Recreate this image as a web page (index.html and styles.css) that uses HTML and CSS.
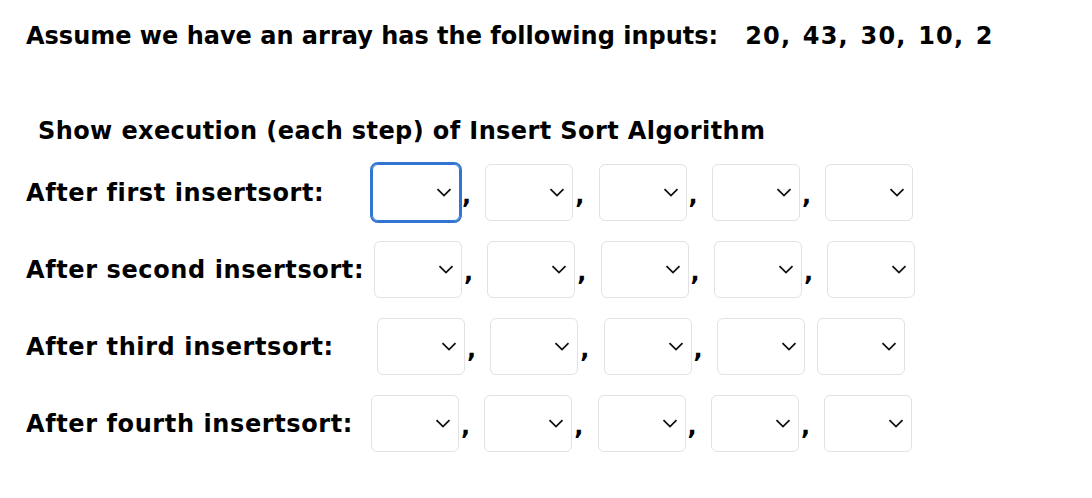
FILE: index.html
```html
<!DOCTYPE html>
<html lang="en">
<head>
<meta charset="utf-8">
<title>Insert Sort Steps</title>
<link rel="stylesheet" href="styles.css">
</head>
<body>
<main class="quiz">
  <p class="prompt">Assume we have an array has the following inputs:<span class="values">20, 43, 30, 10, 2</span></p>
  <p class="task">Show execution (each step) of Insert Sort Algorithm</p>

  <div class="steps">
    <div class="step">
      <span class="step-label">After first insertsort:</span>
      <div class="slots">
        <span class="cell"><span class="slot"><select class="pick is-active"><option></option><option>2</option><option>10</option><option>20</option><option>30</option><option>43</option></select><svg class="chev" viewBox="0 0 16 9" aria-hidden="true"><path d="M1.5 1.2 L8 7.6 L14.5 1.2"/></svg></span><span class="comma">,</span></span>
        <span class="cell"><span class="slot"><select class="pick"><option></option><option>2</option><option>10</option><option>20</option><option>30</option><option>43</option></select><svg class="chev" viewBox="0 0 16 9" aria-hidden="true"><path d="M1.5 1.2 L8 7.6 L14.5 1.2"/></svg></span><span class="comma">,</span></span>
        <span class="cell"><span class="slot"><select class="pick"><option></option><option>2</option><option>10</option><option>20</option><option>30</option><option>43</option></select><svg class="chev" viewBox="0 0 16 9" aria-hidden="true"><path d="M1.5 1.2 L8 7.6 L14.5 1.2"/></svg></span><span class="comma">,</span></span>
        <span class="cell"><span class="slot"><select class="pick"><option></option><option>2</option><option>10</option><option>20</option><option>30</option><option>43</option></select><svg class="chev" viewBox="0 0 16 9" aria-hidden="true"><path d="M1.5 1.2 L8 7.6 L14.5 1.2"/></svg></span><span class="comma">,</span></span>
        <span class="cell"><span class="slot"><select class="pick"><option></option><option>2</option><option>10</option><option>20</option><option>30</option><option>43</option></select><svg class="chev" viewBox="0 0 16 9" aria-hidden="true"><path d="M1.5 1.2 L8 7.6 L14.5 1.2"/></svg></span></span>
      </div>
    </div>

    <div class="step step--second">
      <span class="step-label">After second insertsort:</span>
      <div class="slots">
        <span class="cell"><span class="slot"><select class="pick"><option></option><option>2</option><option>10</option><option>20</option><option>30</option><option>43</option></select><svg class="chev" viewBox="0 0 16 9" aria-hidden="true"><path d="M1.5 1.2 L8 7.6 L14.5 1.2"/></svg></span><span class="comma">,</span></span>
        <span class="cell"><span class="slot"><select class="pick"><option></option><option>2</option><option>10</option><option>20</option><option>30</option><option>43</option></select><svg class="chev" viewBox="0 0 16 9" aria-hidden="true"><path d="M1.5 1.2 L8 7.6 L14.5 1.2"/></svg></span><span class="comma">,</span></span>
        <span class="cell"><span class="slot"><select class="pick"><option></option><option>2</option><option>10</option><option>20</option><option>30</option><option>43</option></select><svg class="chev" viewBox="0 0 16 9" aria-hidden="true"><path d="M1.5 1.2 L8 7.6 L14.5 1.2"/></svg></span><span class="comma">,</span></span>
        <span class="cell"><span class="slot"><select class="pick"><option></option><option>2</option><option>10</option><option>20</option><option>30</option><option>43</option></select><svg class="chev" viewBox="0 0 16 9" aria-hidden="true"><path d="M1.5 1.2 L8 7.6 L14.5 1.2"/></svg></span><span class="comma">,</span></span>
        <span class="cell"><span class="slot"><select class="pick"><option></option><option>2</option><option>10</option><option>20</option><option>30</option><option>43</option></select><svg class="chev" viewBox="0 0 16 9" aria-hidden="true"><path d="M1.5 1.2 L8 7.6 L14.5 1.2"/></svg></span></span>
      </div>
    </div>

    <div class="step step--third">
      <span class="step-label">After third insertsort:</span>
      <div class="slots">
        <span class="cell"><span class="slot"><select class="pick"><option></option><option>2</option><option>10</option><option>20</option><option>30</option><option>43</option></select><svg class="chev" viewBox="0 0 16 9" aria-hidden="true"><path d="M1.5 1.2 L8 7.6 L14.5 1.2"/></svg></span><span class="comma">,</span></span>
        <span class="cell"><span class="slot"><select class="pick"><option></option><option>2</option><option>10</option><option>20</option><option>30</option><option>43</option></select><svg class="chev" viewBox="0 0 16 9" aria-hidden="true"><path d="M1.5 1.2 L8 7.6 L14.5 1.2"/></svg></span><span class="comma">,</span></span>
        <span class="cell"><span class="slot"><select class="pick"><option></option><option>2</option><option>10</option><option>20</option><option>30</option><option>43</option></select><svg class="chev" viewBox="0 0 16 9" aria-hidden="true"><path d="M1.5 1.2 L8 7.6 L14.5 1.2"/></svg></span><span class="comma">,</span></span>
        <span class="cell"><span class="slot"><select class="pick"><option></option><option>2</option><option>10</option><option>20</option><option>30</option><option>43</option></select><svg class="chev" viewBox="0 0 16 9" aria-hidden="true"><path d="M1.5 1.2 L8 7.6 L14.5 1.2"/></svg></span></span>
        <span class="cell"><span class="slot"><select class="pick"><option></option><option>2</option><option>10</option><option>20</option><option>30</option><option>43</option></select><svg class="chev" viewBox="0 0 16 9" aria-hidden="true"><path d="M1.5 1.2 L8 7.6 L14.5 1.2"/></svg></span></span>
      </div>
    </div>

    <div class="step step--fourth">
      <span class="step-label">After fourth insertsort:</span>
      <div class="slots">
        <span class="cell"><span class="slot"><select class="pick"><option></option><option>2</option><option>10</option><option>20</option><option>30</option><option>43</option></select><svg class="chev" viewBox="0 0 16 9" aria-hidden="true"><path d="M1.5 1.2 L8 7.6 L14.5 1.2"/></svg></span><span class="comma">,</span></span>
        <span class="cell"><span class="slot"><select class="pick"><option></option><option>2</option><option>10</option><option>20</option><option>30</option><option>43</option></select><svg class="chev" viewBox="0 0 16 9" aria-hidden="true"><path d="M1.5 1.2 L8 7.6 L14.5 1.2"/></svg></span><span class="comma">,</span></span>
        <span class="cell"><span class="slot"><select class="pick"><option></option><option>2</option><option>10</option><option>20</option><option>30</option><option>43</option></select><svg class="chev" viewBox="0 0 16 9" aria-hidden="true"><path d="M1.5 1.2 L8 7.6 L14.5 1.2"/></svg></span><span class="comma">,</span></span>
        <span class="cell"><span class="slot"><select class="pick"><option></option><option>2</option><option>10</option><option>20</option><option>30</option><option>43</option></select><svg class="chev" viewBox="0 0 16 9" aria-hidden="true"><path d="M1.5 1.2 L8 7.6 L14.5 1.2"/></svg></span><span class="comma">,</span></span>
        <span class="cell"><span class="slot"><select class="pick"><option></option><option>2</option><option>10</option><option>20</option><option>30</option><option>43</option></select><svg class="chev" viewBox="0 0 16 9" aria-hidden="true"><path d="M1.5 1.2 L8 7.6 L14.5 1.2"/></svg></span></span>
      </div>
    </div>
  </div>
</main>
</body>
</html>
```

FILE: styles.css
```css
* { box-sizing: border-box; }

html, body {
  margin: 0;
  padding: 0;
  background: #ffffff;
}

body {
  font-family: "Comic Sans MS", "DejaVu Sans", "Lato", sans-serif;
  font-weight: 700;
  font-size: 24px;
  font-variant-ligatures: none;
  color: #000000;
}

.quiz {
  padding: 21px 0 0 26px;
}

.prompt {
  margin: 0;
  line-height: 30px;
  white-space: nowrap;
}

.values {
  margin-left: 27px;
  word-spacing: 2px;
  letter-spacing: 1.2px;
}

.task {
  margin: 65px 0 0 12px;
  line-height: 30px;
  letter-spacing: 0.4px;
}

.steps {
  margin-top: 18px;
  display: flex;
  flex-direction: column;
  gap: 20px;
}

.step {
  display: flex;
  align-items: center;
  height: 57px;
}

.step-label {
  width: 346px;
  flex: none;
  line-height: 30px;
  white-space: nowrap;
  letter-spacing: 0.6px;
}

.slots {
  display: flex;
  align-items: center;
  gap: 12.5px;
}

.step--second .slots { margin-left: 2px; }
.step--third .slots { margin-left: 5px; }
.step--fourth .slots { margin-left: -1px; }

.cell {
  display: flex;
  align-items: center;
}

.slot {
  position: relative;
  display: block;
  width: 88px;
  height: 57px;
}

.pick {
  appearance: none;
  -webkit-appearance: none;
  display: block;
  width: 88px;
  height: 57px;
  margin: 0;
  padding: 0 30px 0 10px;
  border: 1px solid #e2e2e2;
  border-radius: 6px;
  background: #ffffff;
  font: inherit;
  color: #000;
  outline: none;
}

.pick.is-active {
  border-color: #3075d1;
  outline: 2px solid #3075d1;
  outline-offset: 0;
}

.chev {
  position: absolute;
  right: 8px;
  top: 24px;
  width: 16px;
  height: 9px;
  fill: none;
  stroke: #111111;
  stroke-width: 1.8;
  pointer-events: none;
}

.comma {
  width: 12.8px;
  padding-left: 2px;
  line-height: 30px;
  margin-top: 4px;
}
```
